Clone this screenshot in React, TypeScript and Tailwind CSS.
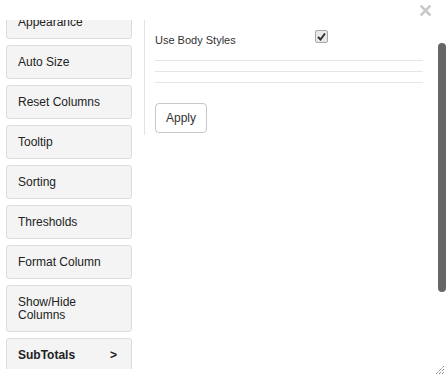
import React from 'react';

const menuItems = [
  'Appearance',
  'Auto Size',
  'Reset Columns',
  'Tooltip',
  'Sorting',
  'Thresholds',
  'Format Column',
  'Show/Hide Columns',
];

function App() {
  return (
    <div className="relative w-[446px] h-[377px] bg-white flex flex-col overflow-hidden font-['Liberation_Sans',Arial,sans-serif] text-[12px] text-[#222]">
      {/* Close */}
      <div className="h-[20px] flex justify-end pr-[15px] pt-[5px]">
        <svg width="11" height="11" viewBox="0 0 11 11">
          <path d="M1.5 1.5 L9.5 9.5 M9.5 1.5 L1.5 9.5" stroke="#c9c9c9" strokeWidth="2.6" strokeLinecap="square" />
        </svg>
      </div>

      <div className="flex h-[349px]">
        {/* Left menu (scrolled) */}
        <div className="w-[144px] shrink-0 overflow-hidden pl-[6px]">
          <div className="flex flex-col gap-[6px] mt-[-15px]">
            {menuItems.map((item) => (
              <div
                key={item}
                className="w-[126px] border border-[#dcdcdc] rounded-[3px] bg-[#f4f4f4] pl-[11px] pr-[14px] pt-[10px] pb-[9px] leading-[13px]"
              >
                {item}
              </div>
            ))}
            <div className="w-[126px] border border-[#dcdcdc] rounded-[3px] bg-[#f4f4f4] pl-[11px] pr-[14px] pt-[10px] pb-[9px] leading-[13px] font-bold flex justify-between">
              <span>SubTotals</span>
              <span>&gt;</span>
            </div>
          </div>
        </div>

        {/* Right settings */}
        <div className="w-[279px] shrink-0 self-start border-l border-[#e3e3e3] pl-[10px] pb-[2px]">
          <div className="h-[41px] border-b border-[#e6e6e6] flex items-start pt-[13px] text-[#333]">
            <span className="w-[160px] leading-[14px] text-[11px]">Use Body Styles</span>
            <span className="mt-[-3px] w-[13px] h-[13px] border border-[#a8a8a8] rounded-[2px] bg-[#e9e9e9] flex items-center justify-center">
              <svg width="9" height="9" viewBox="0 0 9 9">
                <path d="M1 5 L3.5 7.5 L8 1.5" stroke="#333" strokeWidth="2" fill="none" />
              </svg>
            </span>
          </div>
          <div className="h-[11px] border-b border-[#e6e6e6]" />
          <div className="h-[11px] border-b border-[#e6e6e6]" />
          <button className="mt-[20px] w-[52px] h-[30px] border border-[#c8c8c8] rounded-[4px] bg-white text-[#333] text-[12px] flex items-center justify-center">
            Apply
          </button>
        </div>

        {/* Scrollbar */}
        <div className="ml-[15px] mt-[23px] w-[8px] h-[249px] rounded-t-[4px] rounded-b-[4px] bg-[#666]" />
      </div>

      {/* Resize grip */}
      <svg className="absolute right-[2px] bottom-[3px]" width="8" height="8" viewBox="0 0 8 8">
        <path d="M0 8 L8 0 M3 8 L8 3 M6 8 L8 6" stroke="#555" strokeWidth="1" strokeDasharray="1 1" />
      </svg>
    </div>
  );
}

export default App;
